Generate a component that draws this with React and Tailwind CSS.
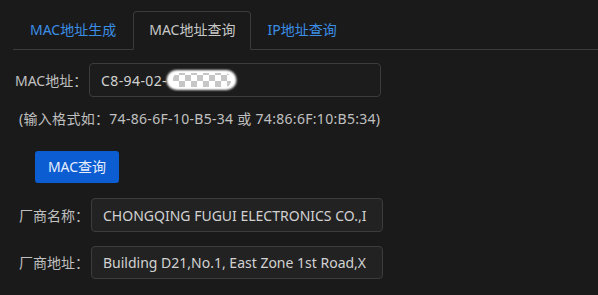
import React from "react";

const font = { fontFamily: '"Noto Sans", "Noto Sans CJK SC", sans-serif' };

function Blob() {
  return (
    <svg width="74" height="24" viewBox="0 0 74 24" className="shrink-0 -ml-[2px]">
      <defs>
        <pattern id="chk" width="12" height="12" patternUnits="userSpaceOnUse" x="2" y="1">
          <rect width="12" height="12" fill="#ffffff" />
          <rect width="6" height="6" fill="#c6c6c6" />
          <rect x="6" y="6" width="6" height="6" fill="#c6c6c6" />
        </pattern>
        <filter id="bl" x="-20%" y="-40%" width="140%" height="180%">
          <feGaussianBlur stdDeviation="1.3" />
        </filter>
      </defs>
      <rect x="1.5" y="2" width="70" height="20" rx="10" fill="#ffffff" filter="url(#bl)" />
      <rect x="8" y="5" width="58" height="14" rx="6" fill="url(#chk)" />
    </svg>
  );
}

export default function App() {
  return (
    <div className="w-[598px] h-[295px] bg-[#1a1a1a] overflow-hidden text-[14px]" style={font}>
      <div className="pt-[11px] pl-[13px]">
        <div className="flex border-b border-[#3b3b3b] leading-[20px]">
          <div className="px-[16px] py-[8px] border border-transparent text-[#3a8ee6]">MAC地址生成</div>
          <div className="px-[15px] py-[8px] border border-[#3b3b3b] border-b-[#1a1a1a] -mb-px rounded-t-[4px] bg-[#1a1a1a] text-[#c8c8c8]">MAC地址查询</div>
          <div className="px-[15px] py-[8px] border border-transparent text-[#3a8ee6]">IP地址查询</div>
        </div>
      </div>

      <div className="flex items-center mt-[13px] pl-[15px]">
        <span className="text-[#c0c0c0] w-[74px] whitespace-nowrap">MAC地址：</span>
        <div className="w-[292px] h-[34px] border border-[#3c3c3c] rounded-[4px] bg-[#1c1c1c] flex items-center pl-[11px] text-[#d2d2d2]">
          <span className="tracking-[0.4px]">C8-94-02-</span>
          <Blob />
        </div>
      </div>

      <div className="mt-[11px] pl-[19px] text-[#c0c0c0] whitespace-nowrap tracking-[0.3px]">
        (输入格式如：74-86-6F-10-B5-34 或 74:86:6F:10:B5:34)
      </div>

      <div className="mt-[22px] pl-[35px]">
        <button className="w-[84px] h-[32px] bg-[#0b5dd1] rounded-[3px] text-[#e8eefc] leading-[20px]">MAC查询</button>
      </div>

      <div className="flex items-center mt-[15px] pl-[19px]">
        <span className="text-[#c0c0c0] w-[72px] whitespace-nowrap">厂商名称：</span>
        <div className="w-[292px] h-[34px] border border-[#3c3c3c] rounded-[4px] bg-[#222222] flex items-center pl-[11px] pr-[2px] text-[#d2d2d2] overflow-hidden whitespace-nowrap">
          CHONGQING FUGUI ELECTRONICS CO.,I
        </div>
      </div>

      <div className="flex items-center mt-[14px] pl-[19px]">
        <span className="text-[#c0c0c0] w-[72px] whitespace-nowrap">厂商地址：</span>
        <div className="w-[292px] h-[33px] border border-[#3c3c3c] rounded-[4px] bg-[#222222] flex items-center pl-[11px] pr-[2px] text-[#d2d2d2] overflow-hidden whitespace-nowrap">
          Building D21,No.1, East Zone 1st Road,X
        </div>
      </div>
    </div>
  );
}
